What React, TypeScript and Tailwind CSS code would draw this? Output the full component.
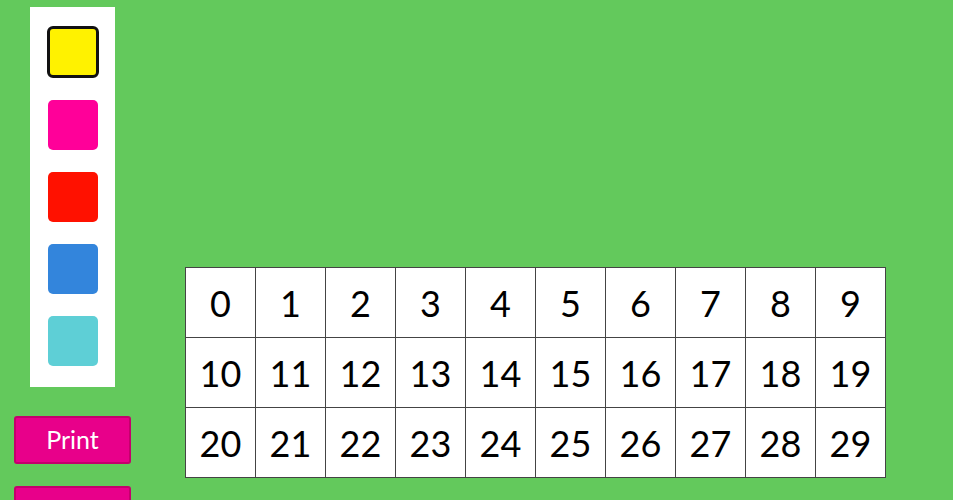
import React, { useState } from "react";

const colours = ["#fff200", "#ff0099", "#ff1100", "#3385dc", "#5ecfd6"];

export default function App() {
  const [selected, setSelected] = useState(0);
  const rows = [0, 1, 2];

  return (
    <div className="flex h-[500px] w-[953px] overflow-hidden bg-[#63c95c] font-['Lato','Open_Sans',sans-serif]">
      <div className="flex w-[171px] shrink-0 flex-col pl-[14px] pt-[7px]">
        <div className="ml-4 flex h-[380px] w-[85px] shrink-0 flex-col items-center gap-[22px] bg-white pt-[19px]">
          {colours.map((c, i) => (
            <button
              key={c}
              onClick={() => setSelected(i)}
              className={
                i === selected
                  ? "h-[52px] w-[52px] shrink-0 rounded-[6px] border-[3px] border-[#111]"
                  : "h-[50px] w-[50px] shrink-0 rounded-[5px]"
              }
              style={{ backgroundColor: c }}
            />
          ))}
        </div>
        <button className="mt-[29px] h-[48px] w-[117px] shrink-0 rounded-[3px] border-2 border-[#c4006c] bg-[#e8008a] text-[25px] text-white">
          Print
        </button>
        <button className="mt-[22px] h-[48px] w-[117px] shrink-0 rounded-[3px] border-2 border-[#c4006c] bg-[#e8008a] text-[25px] text-white">
          Reset
        </button>
      </div>
      <div className="mt-[267px] ml-[14px]">
        <table className="border-collapse bg-white">
          <tbody>
            {rows.map((r) => (
              <tr key={r}>
                {Array.from({ length: 10 }, (_, c) => (
                  <td
                    key={c}
                    className="h-[70px] w-[70px] border border-[#444] p-0 text-center text-[36px] leading-none text-black"
                  >
                    {r * 10 + c}
                  </td>
                ))}
              </tr>
            ))}
          </tbody>
        </table>
      </div>
    </div>
  );
}
